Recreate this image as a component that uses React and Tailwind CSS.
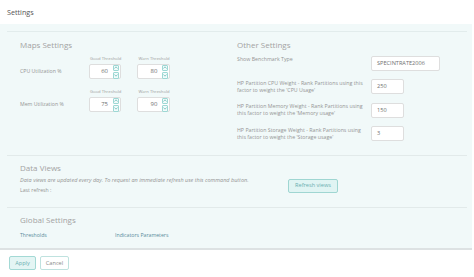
import React from "react";

function Spinner() {
  return (
    <div className="flex flex-col gap-[1px] mr-[1px]">
      {[0, 1].map((i) => (
        <div
          key={i}
          className="w-[6px] h-[6.5px] border border-[#9dd8d4] bg-[#f2fbfb] rounded-[1px] flex items-center justify-center"
        >
          <svg width="4" height="3" viewBox="0 0 4 3">
            <path
              d={i === 0 ? "M0.5 2.5 L2 0.8 L3.5 2.5" : "M0.5 0.5 L2 2.2 L3.5 0.5"}
              fill="none"
              stroke="#5fb6b0"
              strokeWidth="0.7"
            />
          </svg>
        </div>
      ))}
    </div>
  );
}

function NumInput({ label, value, w }) {
  return (
    <div className="flex flex-col">
      <div className="h-[6px] leading-[6px] text-[4.2px] text-[#a0a0a0] pl-[1px]">{label}</div>
      <div
        className={`mt-[2px] h-[15px] ${w} bg-white border border-[#dedede] rounded-[2px] flex items-center justify-end`}
      >
        <span className="text-[6px] text-[#707070] mr-[5px]">{value}</span>
        <Spinner />
      </div>
    </div>
  );
}

function MapRow({ label, good, warn, className }) {
  return (
    <div className={`flex items-end ${className}`}>
      <div className="w-[69px] h-[15px] flex items-center text-[5.2px] text-[#959595]">{label}</div>
      <NumInput label="Good Threshold" value={good} w="w-[32px]" />
      <div className="w-[16px]" />
      <NumInput label="Warn Threshold" value={warn} w="w-[33px]" />
    </div>
  );
}

function OtherRow({ lines, value, w }) {
  return (
    <div className="flex items-start h-[15px]">
      <div className="w-[134px] text-[5.25px] leading-[7px] text-[#959595] pt-[0.5px]">
        {lines.map((l, i) => (
          <div key={i} className="whitespace-nowrap">{l}</div>
        ))}
      </div>
      <div
        className={`${w} h-[15px] bg-white border border-[#dedede] rounded-[2px] flex items-center pl-[5px] text-[5.6px] text-[#707070] whitespace-nowrap overflow-hidden`}
      >
        {value}
      </div>
    </div>
  );
}

export default function App() {
  return (
    <div className="w-[474px] h-[277px] bg-white font-['Open_Sans',sans-serif] overflow-hidden">
      <div className="h-[24px] flex items-center pl-[7px] text-[7.2px] text-[#555]">Settings</div>
      <div className="w-[472px] h-[226px] bg-[#f1f9f9] border-b-2 border-[#dde2e3] pl-[7px] pr-[5px] pt-[7px]">
        <div className="border-t border-[#e2ecec]">
          <div className="flex h-[124px] border-b border-[#e2eaea]">
            <div className="w-[230px] pl-[13px]">
              <div className="mt-[7px] h-[12px] leading-[12px] text-[8px] text-[#a3a3a3]">Maps Settings</div>
              <MapRow className="mt-[5px]" label="CPU Utilization %" good="60" warn="80" />
              <MapRow className="mt-[10px]" label="Mem Utilization %" good="75" warn="90" />
            </div>
            <div className="flex-1">
              <div className="mt-[7px] h-[12px] leading-[12px] text-[8px] text-[#a3a3a3]">Other Settings</div>
              <div className="mt-[4.5px] flex flex-col gap-[8.5px]">
                <OtherRow lines={["Show Benchmark Type"]} value="SPECINTRATE2006" w="w-[69px]" />
                <OtherRow
                  lines={[
                    "HP Partition CPU Weight - Rank Partitions using this",
                    "factor to weight the 'CPU Usage'",
                  ]}
                  value="250"
                  w="w-[33px]"
                />
                <OtherRow
                  lines={[
                    "HP Partition Memory Weight - Rank Partitions using",
                    "this factor to weight the 'Memory usage'",
                  ]}
                  value="150"
                  w="w-[33px]"
                />
                <OtherRow
                  lines={[
                    "HP Partition Storage Weight - Rank Partitions using",
                    "this factor to weight the 'Storage usage'",
                  ]}
                  value="3"
                  w="w-[33px]"
                />
              </div>
            </div>
          </div>
          <div className="h-[52px] border-b border-[#e2eaea] pl-[13px]">
            <div className="pt-[6px] h-[18px] leading-[12px] text-[8px] text-[#a3a3a3]">Data Views</div>
            <div className="mt-[3px] flex items-center">
              <div className="w-[268px]">
                <div className="h-[7px] leading-[7px] text-[5.5px] italic text-[#959595] whitespace-nowrap">
                  Data views are updated every day. To request an immediate refresh use this command button.
                </div>
                <div className="mt-[3px] h-[7px] leading-[7px] text-[5.2px] text-[#959595]">Last refresh :</div>
              </div>
              <div className="w-[50px] h-[14px] border border-[#9fd6d2] bg-[#e0f4f3] rounded-[2px] flex items-center justify-center text-[5.6px] text-[#6aaeb0]">
                Refresh views
              </div>
            </div>
          </div>
          <div className="pl-[13px]">
            <div className="pt-[6px] h-[18px] leading-[12px] text-[8px] text-[#a3a3a3]">Global Settings</div>
            <div className="mt-[6px] flex h-[7px] leading-[7px] text-[5.2px] text-[#5a8c9c]">
              <div className="w-[95px]">Thresholds</div>
              <div>Indicators Parameters</div>
            </div>
          </div>
        </div>
      </div>
      <div className="flex gap-[4px] pl-[9px] mt-[6px]">
        <div className="w-[27px] h-[14px] border border-[#a3d9d5] bg-[#e4f5f4] rounded-[2px] flex items-center justify-center text-[5.6px] text-[#6aaeb0]">
          Apply
        </div>
        <div className="w-[29px] h-[14px] border border-[#bfe2df] bg-white rounded-[2px] flex items-center justify-center text-[5.6px] text-[#888]">
          Cancel
        </div>
      </div>
    </div>
  );
}
